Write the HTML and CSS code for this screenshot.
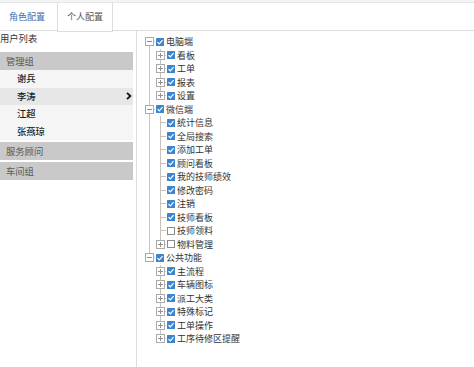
FILE: index.html
```html
<!DOCTYPE html>
<html lang="zh">
<head>
<meta charset="utf-8">
<link rel="stylesheet" href="styles.css">
</head>
<body>
<svg class="defs" aria-hidden="true">
  <defs>
    <symbol id="cb" viewBox="0 0 8 8"><rect width="8" height="8" rx="0.6" fill="#3a84d0"/><path d="M1.5 4.1 L3.3 5.8 L6.6 2.2" fill="none" stroke="#fff" stroke-width="1.2"/></symbol>
    <symbol id="cbo" viewBox="0 0 8 8"><rect x="0.5" y="0.5" width="7" height="7" fill="#fff" stroke="#8c8c8c"/></symbol>
    <symbol id="plus" viewBox="0 0 9 9"><rect x="0.5" y="0.5" width="8" height="8" fill="#fff" stroke="#aaaaaa"/><path d="M2 4.5H7M4.5 2V7" stroke="#909090"/></symbol>
    <symbol id="minus" viewBox="0 0 9 9"><rect x="0.5" y="0.5" width="8" height="8" fill="#fff" stroke="#aaaaaa"/><path d="M2 4.5H7" stroke="#909090"/></symbol>
  </defs>
</svg>
<div class="top-band"></div>
<div class="tabs">
  <div class="tab">角色配置</div>
  <div class="tab active">个人配置</div>
</div>
<div class="content">
  <div class="left">
    <div class="list-title">用户列表</div>
    <div class="group">
      <div class="group-head">管理组</div>
      <div class="item">谢兵</div>
      <div class="item selected">李涛<svg class="chev" width="6" height="8" viewBox="0 0 6 8"><path d="M1 0.8 L4.4 4 L1 7.2" fill="none" stroke="#111" stroke-width="1.8"/></svg></div>
      <div class="item">江超</div>
      <div class="item">张燕琼</div>
    </div>
    <div class="group"><div class="group-head">服务顾问</div></div>
    <div class="group"><div class="group-head">车间组</div></div>
  </div>
  <div class="tree">
    <div class="row"><span class="cell sw first"><svg class="box"><use href="#minus"/></svg></span><svg class="chk"><use href="#cb"/></svg><span class="t">电脑端</span></div>
    <div class="row"><span class="cell ind line"></span><span class="cell sw mid"><svg class="box"><use href="#plus"/></svg></span><svg class="chk"><use href="#cb"/></svg><span class="t">看板</span></div>
    <div class="row"><span class="cell ind line"></span><span class="cell sw mid"><svg class="box"><use href="#plus"/></svg></span><svg class="chk"><use href="#cb"/></svg><span class="t">工单</span></div>
    <div class="row"><span class="cell ind line"></span><span class="cell sw mid"><svg class="box"><use href="#plus"/></svg></span><svg class="chk"><use href="#cb"/></svg><span class="t">报表</span></div>
    <div class="row"><span class="cell ind line"></span><span class="cell sw last"><svg class="box"><use href="#plus"/></svg></span><svg class="chk"><use href="#cb"/></svg><span class="t">设置</span></div>
    <div class="row"><span class="cell sw mid"><svg class="box"><use href="#minus"/></svg></span><svg class="chk"><use href="#cb"/></svg><span class="t">微信端</span></div>
    <div class="row"><span class="cell ind line"></span><span class="cell sw mid"></span><svg class="chk"><use href="#cb"/></svg><span class="t">统计信息</span></div>
    <div class="row"><span class="cell ind line"></span><span class="cell sw mid"></span><svg class="chk"><use href="#cb"/></svg><span class="t">全局搜索</span></div>
    <div class="row"><span class="cell ind line"></span><span class="cell sw mid"></span><svg class="chk"><use href="#cb"/></svg><span class="t">添加工单</span></div>
    <div class="row"><span class="cell ind line"></span><span class="cell sw mid"></span><svg class="chk"><use href="#cb"/></svg><span class="t">顾问看板</span></div>
    <div class="row"><span class="cell ind line"></span><span class="cell sw mid"></span><svg class="chk"><use href="#cb"/></svg><span class="t">我的技师绩效</span></div>
    <div class="row"><span class="cell ind line"></span><span class="cell sw mid"></span><svg class="chk"><use href="#cb"/></svg><span class="t">修改密码</span></div>
    <div class="row"><span class="cell ind line"></span><span class="cell sw mid"></span><svg class="chk"><use href="#cb"/></svg><span class="t">注销</span></div>
    <div class="row"><span class="cell ind line"></span><span class="cell sw mid"></span><svg class="chk"><use href="#cb"/></svg><span class="t">技师看板</span></div>
    <div class="row"><span class="cell ind line"></span><span class="cell sw mid"></span><svg class="chk"><use href="#cbo"/></svg><span class="t">技师领料</span></div>
    <div class="row"><span class="cell ind line"></span><span class="cell sw last"><svg class="box"><use href="#plus"/></svg></span><svg class="chk"><use href="#cbo"/></svg><span class="t">物料管理</span></div>
    <div class="row"><span class="cell sw last"><svg class="box"><use href="#minus"/></svg></span><svg class="chk"><use href="#cb"/></svg><span class="t">公共功能</span></div>
    <div class="row"><span class="cell ind"></span><span class="cell sw mid"><svg class="box"><use href="#plus"/></svg></span><svg class="chk"><use href="#cb"/></svg><span class="t">主流程</span></div>
    <div class="row"><span class="cell ind"></span><span class="cell sw mid"><svg class="box"><use href="#plus"/></svg></span><svg class="chk"><use href="#cb"/></svg><span class="t">车辆图标</span></div>
    <div class="row"><span class="cell ind"></span><span class="cell sw mid"><svg class="box"><use href="#plus"/></svg></span><svg class="chk"><use href="#cb"/></svg><span class="t">派工大类</span></div>
    <div class="row"><span class="cell ind"></span><span class="cell sw mid"><svg class="box"><use href="#plus"/></svg></span><svg class="chk"><use href="#cb"/></svg><span class="t">特殊标记</span></div>
    <div class="row"><span class="cell ind"></span><span class="cell sw mid"><svg class="box"><use href="#plus"/></svg></span><svg class="chk"><use href="#cb"/></svg><span class="t">工单操作</span></div>
    <div class="row"><span class="cell ind"></span><span class="cell sw last"><svg class="box"><use href="#plus"/></svg></span><svg class="chk"><use href="#cb"/></svg><span class="t">工序待修区提醒</span></div>
  </div>
</div>
</body>
</html>
```
FILE: styles.css
```css
html, body {
  margin: 0;
  padding: 0;
  background: #fff;
}
body {
  font-family: "Noto Sans CJK SC", "Noto Sans", sans-serif;
  font-size: 9px;
  color: #333;
  width: 474px;
  height: 367px;
  overflow: hidden;
}
.defs {
  display: block;
  width: 0;
  height: 0;
  overflow: hidden;
}
.top-band {
  height: 2px;
  background: #f3f3f3;
  border-bottom: 1px solid #e6e6e6;
}
.tabs {
  display: flex;
  height: 27px;
  border-bottom: 1px solid #dddddd;
  padding-left: 0;
}
.tab {
  padding: 0 9px;
  line-height: 27px;
  border: 1px solid transparent;
  border-top: 0;
  color: #3a6fb0;
  margin-right: 1px;
  margin-left: -1px;
}
.tab + .tab {
  margin-left: 1px;
}
.tab.active {
  color: #555;
  background: #fff;
  border-color: #dddddd;
  height: 28px;
}
.content {
  display: flex;
  height: 336px;
}
.left {
  width: 136px;
  flex: none;
  border-right: 1px solid #dddddd;
  display: flex;
  flex-direction: column;
}
.list-title {
  height: 20px;
  padding-top: 1px;
  line-height: 12px;
  font-size: 9.3px;
  color: #333;
}
.group {
  width: 133px;
  margin-bottom: 2px;
}
.group-head {
  height: 18px;
  line-height: 18px;
  background: #c9c9c9;
  color: #5a5a5a;
  padding-left: 6px;
  font-size: 9.3px;
}
.item {
  height: 17.5px;
  line-height: 17.5px;
  background: #f5f5f5;
  padding-left: 17px;
  color: #1e1e1e;
  font-size: 9.3px;
  font-weight: 500;
  display: flex;
  align-items: center;
}
.item.selected {
  background: #e7e7e7;
}
.chev {
  margin-left: auto;
  margin-right: 1px;
}
.tree {
  flex: 1;
  padding: 4px 0 0 7px;
  --ln: #c9c2ba;
}
.row {
  display: flex;
  height: 13.5px;
  align-items: stretch;
}
.cell {
  width: 11px;
  flex: none;
  display: flex;
  align-items: center;
  justify-content: center;
  background-repeat: no-repeat;
}
.ind.line {
  background-image: linear-gradient(var(--ln), var(--ln));
  background-size: 1px 100%;
  background-position: 5px 0;
}
.sw.mid {
  background-image: linear-gradient(var(--ln), var(--ln)), linear-gradient(var(--ln), var(--ln));
  background-size: 1px 100%, 6px 1px;
  background-position: 5px 0, 5px 50%;
}
.sw.first {
  background-image: linear-gradient(var(--ln), var(--ln)), linear-gradient(var(--ln), var(--ln));
  background-size: 1px 50%, 6px 1px;
  background-position: 5px 100%, 5px 50%;
}
.sw.last {
  background-image: linear-gradient(var(--ln), var(--ln)), linear-gradient(var(--ln), var(--ln));
  background-size: 1px 50%, 6px 1px;
  background-position: 5px 0, 5px 50%;
}
.box {
  width: 9px;
  height: 9px;
  display: block;
}
.chk {
  width: 8px;
  height: 8px;
  flex: none;
  align-self: center;
  margin-left: 1px;
  display: block;
}
.t {
  margin-left: 2px;
  line-height: 13.5px;
  white-space: nowrap;
  color: #333;
}
```
